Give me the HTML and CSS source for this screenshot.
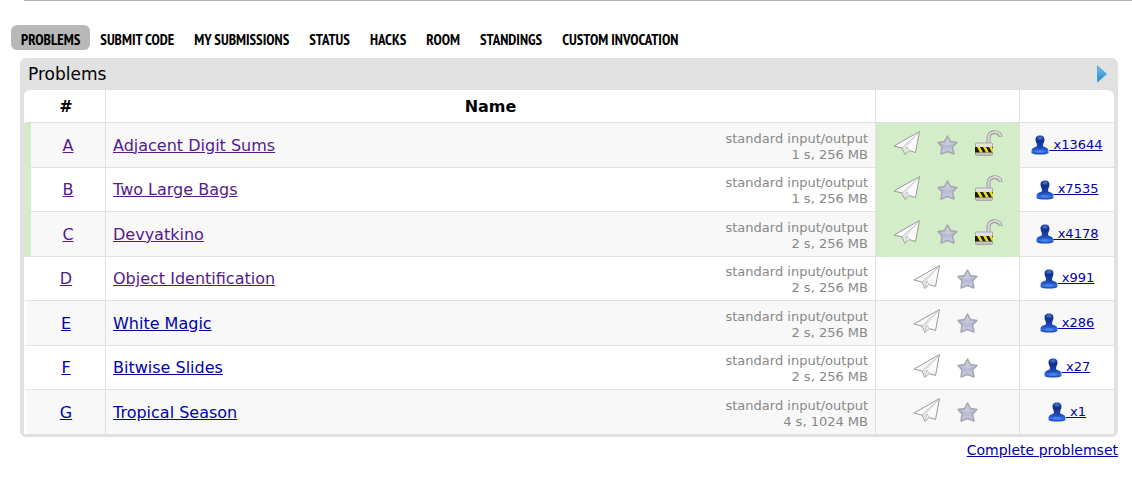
FILE: index.html
```html
<!DOCTYPE html>
<html lang="en">
<head>
    <meta charset="UTF-8">
    <title>Problems</title>
    <link rel="stylesheet" href="styles.css">
</head>
<body>
    <svg class="sprite" aria-hidden="true">
        <defs>
            <linearGradient id="star-fill" x1="0" y1="0" x2="0" y2="1">
                <stop offset="0" stop-color="#cfcfd6"/>
                <stop offset="0.5" stop-color="#b4b6d0"/>
                <stop offset="1" stop-color="#cfd0ea"/>
            </linearGradient>
            <linearGradient id="lock-fill" x1="0" y1="0" x2="0" y2="1">
                <stop offset="0" stop-color="#e9e9e9"/>
                <stop offset="1" stop-color="#bdbdbd"/>
            </linearGradient>
            <linearGradient id="user-fill" x1="0" y1="0" x2="0" y2="1">
                <stop offset="0" stop-color="#2a4fae"/>
                <stop offset="0.3" stop-color="#12308a"/>
                <stop offset="0.6" stop-color="#1a44b4"/>
                <stop offset="0.85" stop-color="#2f6ee0"/>
                <stop offset="1" stop-color="#1a44b0"/>
            </linearGradient>
            <linearGradient id="arrow-fill" x1="0" y1="0" x2="0" y2="1">
                <stop offset="0" stop-color="#7cc4f0"/>
                <stop offset="1" stop-color="#1c82cc"/>
            </linearGradient>
        </defs>
        <symbol id="plane" viewBox="0 0 28 28">
            <path d="M26.5 1.5 L1 16 L9 18 L12 24.5 L16 20.5 L22.5 22.5 Z" fill="#fafafa" stroke="#999" stroke-linejoin="round"/>
            <path d="M26 2.5 L9.5 17.5 L12 23.5 L14 17 Z" fill="#e6e6e6"/>
            <path d="M25.5 3 L9 18 M14 17 L12 24 M14 17 L16 20.5" fill="none" stroke="#c4c4c4"/>
        </symbol>
        <symbol id="star" viewBox="0 0 28 28">
            <path d="M13.5 6 L16.500 11.5 L23 12.5 L18.5 17 L20 24 L13.5 21.5 L7 24 L8 17 L4 12.5 L10.5 11.5 Z" fill="url(#star-fill)" stroke="#a6a6b0" stroke-width="1.5" stroke-linejoin="round"/>
            <path d="M13.5 8 L15.5 13 L20.5 13.5 L13.5 16 L6.5 13.5 L11.5 13 Z" fill="#fff" opacity="0.2"/>
        </symbol>
        <symbol id="lock" viewBox="0 0 28 28">
            <path d="M13.5 14 V7.5 C13.5 0.5 25.5 0.5 25.5 7" fill="none" stroke="#9a9a9a" stroke-width="4"/>
            <path d="M13.5 14 V7.5 C13.5 0.5 25.5 0.5 25.5 6.5" fill="none" stroke="#dcdcdc" stroke-width="2"/>
            <rect x="0.5" y="13" width="17" height="12.5" rx="1" fill="url(#lock-fill)" stroke="#a5a5a5"/>
            <rect x="0" y="17" width="18" height="5.5" fill="#1c1a10"/>
            <path d="M2 17 H5 L8 22.5 H5 Z M8 17 H11 L14 22.5 H11 Z M14 17 H17 L18 19 V22.5 H17 Z" fill="#f0dc1e"/>
        </symbol>
        <symbol id="user" viewBox="0 0 18 20">
            <path d="M9 0.5 C12.5 0.5 13.5 2.5 13.5 4.5 C13.5 7 12 8 12 11 C12.5 12.5 17.5 12 17.5 16 V18 C15 20 3 20 0.5 18 V16 C0.5 12 5.5 12.5 6 11 C6 8 4.5 7 4.5 4.5 C4.5 2.5 5.5 0.5 9 0.5 Z" fill="url(#user-fill)"/>
            <ellipse cx="9" cy="3" rx="2.5" ry="1.5" fill="#6f90d8" opacity="0.5"/>
            <path d="M4 16.5 C6 14 12 14 14 16.5 C12 18.5 6 18.5 4 16.5 Z" fill="#5b98f4" opacity="0.5"/>
        </symbol>
    </svg>

    <div class="top-line"></div>

    <nav class="menu">
        <a class="current" href="#">Problems</a>
        <a href="#">Submit Code</a>
        <a href="#">My Submissions</a>
        <a href="#">Status</a>
        <a href="#">Hacks</a>
        <a href="#">Room</a>
        <a href="#">Standings</a>
        <a href="#">Custom Invocation</a>
    </nav>

    <main class="content">
        <div class="datatable">
            <div class="caption">
                <span>Problems</span>
                <button type="button" class="toggle" aria-label="Show filter">
                    <svg width="10" height="18" viewBox="0 0 10 18"><path d="M0.5 1 L9.5 9 L0.5 17 Z" fill="url(#arrow-fill)" stroke="#4aa3dc"/></svg>
                </button>
            </div>
            <table class="problems">
                <colgroup>
                    <col class="col-index">
                    <col>
                    <col class="col-actions">
                    <col class="col-solved">
                </colgroup>
                <thead>
                    <tr><th class="index">#</th><th>Name</th><th></th><th></th></tr>
                </thead>
                <tbody>
                    <tr class="accepted">
                        <td class="index"><a class="visited" href="#">A</a></td>
                        <td><div class="problem"><a class="visited" href="#">Adjacent Digit Sums</a><div class="limits">standard input/output<br>1 s, 256 MB</div></div></td>
                        <td class="actions"><div class="icons">
                            <a href="#" aria-label="Submit"><svg><use href="#plane"/></svg></a>
                            <button type="button" aria-label="Add to favourites"><svg><use href="#star"/></svg></button>
                            <a href="#" aria-label="Lock"><svg><use href="#lock"/></svg></a>
                        </div></td>
                        <td class="solved"><a href="#"><svg class="user"><use href="#user"/></svg> x13644</a></td>
                    </tr>
                    <tr class="accepted">
                        <td class="index"><a class="visited" href="#">B</a></td>
                        <td><div class="problem"><a class="visited" href="#">Two Large Bags</a><div class="limits">standard input/output<br>1 s, 256 MB</div></div></td>
                        <td class="actions"><div class="icons">
                            <a href="#" aria-label="Submit"><svg><use href="#plane"/></svg></a>
                            <button type="button" aria-label="Add to favourites"><svg><use href="#star"/></svg></button>
                            <a href="#" aria-label="Lock"><svg><use href="#lock"/></svg></a>
                        </div></td>
                        <td class="solved"><a href="#"><svg class="user"><use href="#user"/></svg> x7535</a></td>
                    </tr>
                    <tr class="accepted">
                        <td class="index"><a class="visited" href="#">C</a></td>
                        <td><div class="problem"><a class="visited" href="#">Devyatkino</a><div class="limits">standard input/output<br>2 s, 256 MB</div></div></td>
                        <td class="actions"><div class="icons">
                            <a href="#" aria-label="Submit"><svg><use href="#plane"/></svg></a>
                            <button type="button" aria-label="Add to favourites"><svg><use href="#star"/></svg></button>
                            <a href="#" aria-label="Lock"><svg><use href="#lock"/></svg></a>
                        </div></td>
                        <td class="solved"><a href="#"><svg class="user"><use href="#user"/></svg> x4178</a></td>
                    </tr>
                    <tr>
                        <td class="index"><a class="visited" href="#">D</a></td>
                        <td><div class="problem"><a class="visited" href="#">Object Identification</a><div class="limits">standard input/output<br>2 s, 256 MB</div></div></td>
                        <td class="actions"><div class="icons">
                            <a href="#" aria-label="Submit"><svg><use href="#plane"/></svg></a>
                            <button type="button" aria-label="Add to favourites"><svg><use href="#star"/></svg></button>
                        </div></td>
                        <td class="solved"><a href="#"><svg class="user"><use href="#user"/></svg> x991</a></td>
                    </tr>
                    <tr>
                        <td class="index"><a href="#">E</a></td>
                        <td><div class="problem"><a href="#">White Magic</a><div class="limits">standard input/output<br>2 s, 256 MB</div></div></td>
                        <td class="actions"><div class="icons">
                            <a href="#" aria-label="Submit"><svg><use href="#plane"/></svg></a>
                            <button type="button" aria-label="Add to favourites"><svg><use href="#star"/></svg></button>
                        </div></td>
                        <td class="solved"><a href="#"><svg class="user"><use href="#user"/></svg> x286</a></td>
                    </tr>
                    <tr>
                        <td class="index"><a href="#">F</a></td>
                        <td><div class="problem"><a href="#">Bitwise Slides</a><div class="limits">standard input/output<br>2 s, 256 MB</div></div></td>
                        <td class="actions"><div class="icons">
                            <a href="#" aria-label="Submit"><svg><use href="#plane"/></svg></a>
                            <button type="button" aria-label="Add to favourites"><svg><use href="#star"/></svg></button>
                        </div></td>
                        <td class="solved"><a href="#"><svg class="user"><use href="#user"/></svg> x27</a></td>
                    </tr>
                    <tr>
                        <td class="index"><a href="#">G</a></td>
                        <td><div class="problem"><a href="#">Tropical Season</a><div class="limits">standard input/output<br>4 s, 1024 MB</div></div></td>
                        <td class="actions"><div class="icons">
                            <a href="#" aria-label="Submit"><svg><use href="#plane"/></svg></a>
                            <button type="button" aria-label="Add to favourites"><svg><use href="#star"/></svg></button>
                        </div></td>
                        <td class="solved"><a href="#"><svg class="user"><use href="#user"/></svg> x1</a></td>
                    </tr>
                </tbody>
            </table>
        </div>
        <div class="more"><a href="#">Complete problemset</a></div>
    </main>
</body>
</html>
```
FILE: styles.css
```css
body {
    margin: 0;
    background: #fff;
    color: #000;
    font-family: Verdana, "DejaVu Sans", sans-serif;
    font-size: 16px;
}

a {
    color: #0000a8;
}

a.visited {
    color: #551a8b;
}

button {
    padding: 0;
    border: none;
    background: none;
    cursor: pointer;
}

/* keeps the gradients usable, display: none would drop them */
.sprite {
    display: block;
    width: 0;
    height: 0;
}

.top-line {
    height: 1px;
    margin-left: 24px;
    background: #b2b2b2;
}

/* Menu */

.menu {
    display: flex;
    padding: 24px 11px 8px;
}

.menu a {
    padding: 4px 10px 0;
    border-radius: 6px;
    color: #000;
    font-family: "PT Sans Narrow", "Liberation Sans Narrow", "Liberation Sans", sans-serif;
    font-size: 15px;
    font-weight: bold;
    line-height: 21px;
    text-decoration: none;
    text-transform: uppercase;
    white-space: nowrap;
}

.menu .current {
    background: #b8b8b8;
}

/* Problems table */

.content {
    margin: 0 14px 0 20px;
}

.datatable {
    padding: 0 4px 3px;
    border-radius: 6px;
    background: #e1e1e1;
}

.caption {
    display: flex;
    align-items: center;
    justify-content: space-between;
    height: 32px;
    padding: 0 7px 0 4px;
    font-size: 17px;
}

.toggle svg {
    display: block;
}

.problems {
    width: 100%;
    table-layout: fixed;
    border-collapse: separate;
    border-spacing: 0;
    border-radius: 6px 6px 0 0;
    background: #fff;
    overflow: hidden;
}

.col-index {
    width: 82px;
}

.col-actions {
    width: 144px;
}

.col-solved {
    width: 94px;
}

th, td {
    box-sizing: border-box;
    padding: 0;
    border-right: 1px solid #e1e1e1;
    border-bottom: 1px solid #e1e1e1;
}

th {
    height: 33px;
}

td {
    height: 44px;
}

th:last-child, td:last-child {
    border-right: none;
}

tbody tr:nth-child(odd) td {
    height: 45px;
    background: #f8f8f8;
}

tbody tr:last-child td {
    height: 44px;
    border-bottom: none;
}

.index {
    border-left: 3px solid #fff;
    text-align: center;
}

.accepted .index {
    border-left: 7px solid #d4edc9;
}

.problem {
    display: flex;
    align-items: center;
    justify-content: space-between;
    padding: 0 7px;
}

.limits {
    padding-top: 3px;
    color: #888;
    font-size: 13px;
    line-height: 16px;
    text-align: right;
}

tbody .accepted .actions, tbody .accepted:nth-child(odd) .actions {
    border-bottom-color: #d4edc9;
    background: #d4edc9;
}

.icons {
    display: flex;
    justify-content: center;
    gap: 13px;
    padding-bottom: 2px;
}

.icons svg {
    display: block;
    width: 28px;
    height: 28px;
}

.solved {
    font-size: 13px;
    text-align: center;
}

.user {
    width: 18px;
    height: 20px;
    vertical-align: middle;
}

.more {
    padding-top: 5px;
    font-size: 14px;
    text-align: right;
}
```
